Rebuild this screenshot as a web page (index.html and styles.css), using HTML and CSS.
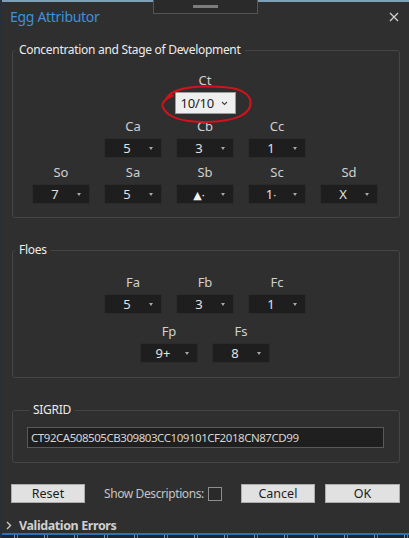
FILE: index.html
```html
<!DOCTYPE html>
<html>
<head>
<meta charset="utf-8">
<link rel="stylesheet" href="styles.css">
</head>
<body>
<div class="topline"></div>
<div class="grip"><span></span></div>
<header class="titlebar">
  <span class="title">Egg Attributor</span>
  <svg class="close" width="10" height="10" viewBox="0 0 10 10"><path d="M1 1L9 9M9 1L1 9" stroke="#cfcfcf" stroke-width="1.3"/></svg>
</header>

<fieldset class="group g1">
  <legend>Concentration and Stage of Development</legend>
  <div class="row r-ct">
    <div class="cell">
      <div class="lbl">Ct</div>
      <div class="combo light"><span class="val">10/10</span><svg class="chev" width="7" height="5" viewBox="0 0 7 5"><path d="M1 1L3.5 3.5L6 1" fill="none" stroke="#444" stroke-width="1.1"/></svg></div>
    </div>
  </div>
  <div class="row">
    <div class="cell"><div class="lbl">Ca</div><div class="combo"><span class="val">5</span><i class="arr"></i></div></div>
    <div class="cell"><div class="lbl">Cb</div><div class="combo"><span class="val">3</span><i class="arr"></i></div></div>
    <div class="cell"><div class="lbl">Cc</div><div class="combo"><span class="val">1</span><i class="arr"></i></div></div>
  </div>
  <div class="row">
    <div class="cell"><div class="lbl">So</div><div class="combo"><span class="val">7</span><i class="arr"></i></div></div>
    <div class="cell"><div class="lbl">Sa</div><div class="combo"><span class="val">5</span><i class="arr"></i></div></div>
    <div class="cell"><div class="lbl">Sb</div><div class="combo"><span class="val sym">▲<small>·</small></span><i class="arr"></i></div></div>
    <div class="cell"><div class="lbl">Sc</div><div class="combo"><span class="val">1<small>·</small></span><i class="arr"></i></div></div>
    <div class="cell"><div class="lbl">Sd</div><div class="combo"><span class="val">X</span><i class="arr"></i></div></div>
  </div>
</fieldset>

<fieldset class="group g2">
  <legend>Floes</legend>
  <div class="row">
    <div class="cell"><div class="lbl">Fa</div><div class="combo"><span class="val">5</span><i class="arr"></i></div></div>
    <div class="cell"><div class="lbl">Fb</div><div class="combo"><span class="val">3</span><i class="arr"></i></div></div>
    <div class="cell"><div class="lbl">Fc</div><div class="combo"><span class="val">1</span><i class="arr"></i></div></div>
  </div>
  <div class="row r-fp">
    <div class="cell"><div class="lbl">Fp</div><div class="combo"><span class="val">9+</span><i class="arr"></i></div></div>
    <div class="cell"><div class="lbl">Fs</div><div class="combo"><span class="val">8</span><i class="arr"></i></div></div>
  </div>
</fieldset>

<fieldset class="group g3">
  <legend>SIGRID</legend>
  <div class="textbox">CT92CA508505CB309803CC109101CF2018CN87CD99</div>
</fieldset>

<div class="buttons">
  <button class="btn reset">Reset</button>
  <span class="showdesc">Show Descriptions:</span>
  <span class="check"></span>
  <button class="btn cancel">Cancel</button>
  <button class="btn ok">OK</button>
</div>

<div class="validation"><svg class="vchev" width="6" height="9" viewBox="0 0 6 9"><path d="M1 1L4.5 4.5L1 8" fill="none" stroke="#c8c8c8" stroke-width="1.4"/></svg><span>Validation Errors</span></div>

<div class="taskbar"></div>

<svg class="annot" width="409" height="538" viewBox="0 0 409 538">
  <path d="M166,99 C171,90.5 183,87 205,86.5 C232,86 248,89.5 250.5,101 C252,114 237,121.5 206,122 C182,122 166,117.5 162.5,106 C162,102.5 166,98.5 173,95.5" fill="none" stroke="#d4121c" stroke-width="2" stroke-linecap="round"/>
</svg>
</body>
</html>
```

FILE: styles.css
```css
html, body {
  margin: 0;
  padding: 0;
}
body {
  width: 409px;
  height: 538px;
  overflow: hidden;
  background: #2f2f2f;
  border-left: 2px solid #27303a;
  box-sizing: border-box;
  font-family: "Noto Sans", "DejaVu Sans", sans-serif;
  font-size: 12px;
  color: #d4d4d4;
  display: flex;
  flex-direction: column;
  position: relative;
}
body > * {
  flex-shrink: 0;
}
.topline {
  height: 2px;
  background: #7f9fb5;
  margin-left: -2px;
}
.grip {
  position: absolute;
  left: 151px;
  top: 0;
  width: 103px;
  height: 13px;
  background: #2a2a2a;
  border: 1px solid #555;
  border-top: none;
  display: flex;
  justify-content: center;
  align-items: center;
}
.grip span {
  display: block;
  width: 25px;
  height: 3px;
  background: #7c7c7c;
}
.titlebar {
  height: 28px;
  display: flex;
  align-items: center;
  justify-content: space-between;
  padding: 0 10px 0 8px;
}
.title {
  font-size: 14px;
  color: #3f8fdc;
  letter-spacing: -0.3px;
}
.close {
  margin-top: 2px;
}
.group {
  margin: 0 9px 0 10px;
  padding: 0;
  border: 1px solid #454545;
  border-radius: 3px;
  min-width: 0;
}
.group legend {
  margin-left: 2px;
  padding: 0 4px 0 4px;
  font-size: 12px;
  line-height: 18px;
  color: #ececec;
  letter-spacing: -0.3px;
}
.g1 {
  margin-top: 11px;
  padding: 13px 0 13px 0;
}
.g2 {
  margin-top: 23px;
  padding: 15px 0 14px 0;
}
.g3 {
  margin-top: 23px;
  padding: 8px 15px 14px 14px;
}
.row {
  display: flex;
  justify-content: center;
  gap: 14px;
  margin-left: -2px;
}
.row + .row {
  margin-top: 6px;
}
.r-ct + .row {
  margin-top: 4px;
}
.r-fp {
  margin-top: 9px !important;
}
.cell {
  display: flex;
  flex-direction: column;
  align-items: center;
  gap: 4px;
}
.lbl {
  font-size: 13px;
  line-height: 16px;
  color: #d0d0d0;
}
.combo {
  width: 58px;
  height: 20px;
  box-sizing: border-box;
  background: #1e1e1e;
  border: 1px solid #2b2b2b;
  display: grid;
  grid-template-columns: 1fr 14px;
  align-items: center;
}
.combo .val {
  text-align: center;
  font-size: 13px;
  color: #e2e2e2;
  padding-left: 2px;
}
.combo .val small {
  font-size: 11px;
}
.combo .sym {
  font-size: 11px;
  color: #f4f4f4;
}
.arr {
  width: 0;
  height: 0;
  border-left: 2.5px solid transparent;
  border-right: 2.5px solid transparent;
  border-top: 3px solid #a8a8a8;
  justify-self: start;
  margin-left: 2px;
}
.combo.light {
  width: 61px;
  height: 22px;
  background: #efefef;
  border: 1px solid #9c9c9c;
  display: flex;
  justify-content: space-between;
  padding: 0 7px 0 5px;
}
.combo.light .val {
  color: #1b1b1b;
  font-size: 13px;
  padding-left: 0;
  letter-spacing: -0.2px;
}
.textbox {
  height: 21px;
  box-sizing: border-box;
  background: #1f1f1f;
  border: 1px solid #595959;
  font-size: 11.5px;
  line-height: 19px;
  padding-left: 3px;
  color: #d6d6d6;
  letter-spacing: -0.45px;
  white-space: nowrap;
  overflow: hidden;
}
.buttons {
  display: flex;
  align-items: center;
  margin-top: 21px;
  padding-left: 9px;
  height: 19px;
}
.btn {
  height: 19px;
  box-sizing: border-box;
  background: #e1e1e1;
  border: 1px solid #adadad;
  border-radius: 0;
  padding: 0;
  font-family: "Noto Sans", "DejaVu Sans", sans-serif;
  font-size: 12.5px;
  line-height: 16px;
  color: #1c1c1c;
}
.reset { width: 74px; }
.showdesc {
  margin-left: 19px;
  font-size: 12px;
  color: #c4c4c4;
  letter-spacing: -0.4px;
}
.check {
  width: 14px;
  height: 14px;
  box-sizing: border-box;
  margin-left: 4px;
  border: 1px solid #8e8e8e;
  background: #2a2a2a;
}
.cancel {
  width: 74px;
  margin-left: 19px;
}
.ok {
  width: 75px;
  margin-left: 10px;
}
.validation {
  margin-top: 15px;
  display: flex;
  align-items: center;
  padding-left: 4px;
  font-weight: bold;
  font-size: 12.5px;
  line-height: 15px;
  color: #cfcfcf;
  letter-spacing: -0.4px;
}
.vchev {
  margin-right: 7px;
}
.taskbar {
  margin-top: auto;
  margin-left: -2px;
  height: 5px;
  box-sizing: border-box;
  border-top: 2px solid #2f6fb5;
  background: repeating-linear-gradient(90deg, #1c2530 0 14px, #8a96a3 14px 15px, #1c2530 15px 17px, #6f7b88 17px 18px, #1c2530 18px 30px);
}
.annot {
  position: absolute;
  left: -2px;
  top: 0;
  pointer-events: none;
}
```
